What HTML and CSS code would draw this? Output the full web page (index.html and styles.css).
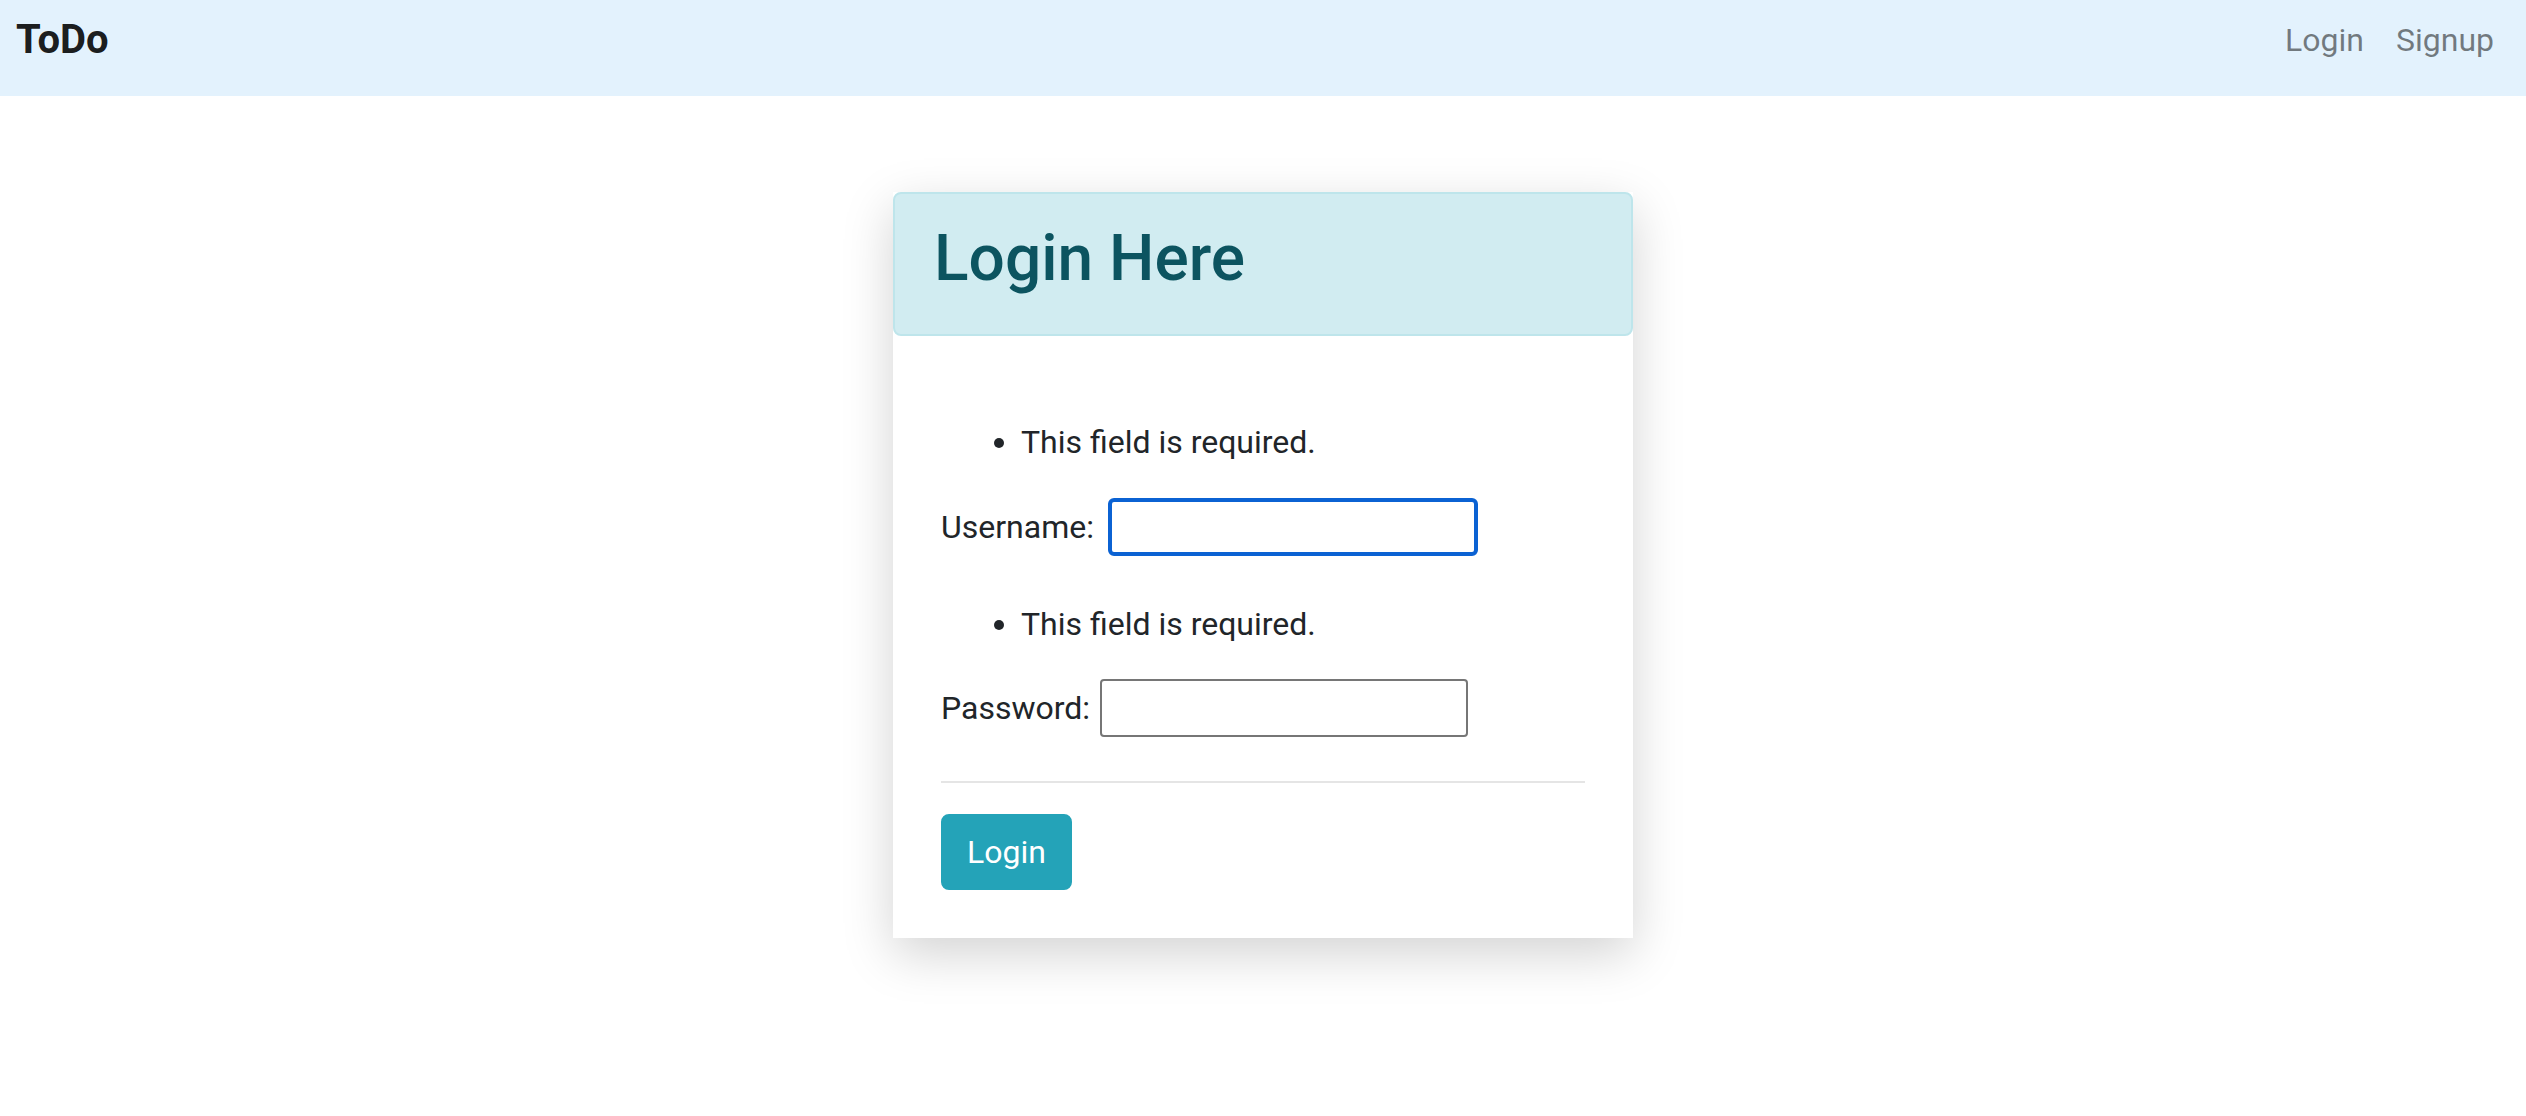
FILE: index.html
```html
<!DOCTYPE html>
<html lang="en">
<head>
    <meta charset="UTF-8">
    <meta name="viewport" content="width=device-width, initial-scale=1.0">
    <title>ToDo - Login</title>
    <link rel="stylesheet" href="styles.css">
</head>
<body>
    <nav class="navbar">
        <a class="brand" href="#">ToDo</a>
        <div class="nav-links">
            <a href="#">Login</a>
            <a href="#">Signup</a>
        </div>
    </nav>

    <main class="page">
        <div class="card">
            <div class="card-header">
                <h2>Login Here</h2>
            </div>

            <div class="card-body">
                <form>
                    <ul class="errorlist first">
                        <li>This field is required.</li>
                    </ul>
                    <div class="field">
                        <label for="id_username">Username:</label>
                        <input type="text" id="id_username" class="focused">
                    </div>

                    <ul class="errorlist">
                        <li>This field is required.</li>
                    </ul>
                    <div class="field">
                        <label for="id_password">Password:</label>
                        <input type="password" id="id_password">
                    </div>

                    <hr>
                    <button type="button" class="btn-login">Login</button>
                </form>
            </div>
        </div>
    </main>
</body>
</html>
```

FILE: styles.css
```css
*{
    margin: 0;
    box-sizing: border-box;
}

body{
    font-family: Roboto, "Liberation Sans", sans-serif;
    font-size: 32px;
    line-height: 48px;
    color: #212529;
    background-color: #ffffff;
}

a{
    text-decoration: none;
}

/* top bar */
.navbar{
    height: 96px;
    padding: 0 16px 16px 16px;
    display: flex;
    align-items: center;
    justify-content: space-between;
    background-color: #e3f2fd;
}

.brand{
    font-size: 40px;
    line-height: 60px;
    font-weight: 700;
    color: rgba(0, 0, 0, 0.9);
}

.nav-links{
    display: flex;
}

.nav-links a{
    padding: 0 16px;
    color: rgba(0, 0, 0, 0.5);
}

/* login card */
.page{
    display: flex;
    justify-content: center;
    padding: 96px 0 120px 0;
}

.card{
    width: 740px;
    background-color: #ffffff;
    box-shadow: 0 16px 48px rgba(0, 0, 0, 0.175);
}

.card-header{
    padding: 26px 38px 37px 39px;
    border: 2px solid #bee5eb;
    border-radius: 8px;
    background-color: #d1ecf1;
}

.card-header h2{
    font-size: 64px;
    line-height: 77px;
    font-weight: 500;
    color: #0c5460;
}

.card-body{
    padding: 48px;
}

.errorlist{
    padding-left: 80px;
    margin-bottom: 31px;
}

.errorlist.first{
    margin-top: 34px;
    margin-bottom: 32px;
}

.field{
    height: 58px;
    margin-bottom: 44px;
    display: flex;
    align-items: center;
    gap: 10px;
}

.field input{
    width: 368px;
    height: 58px;
    padding: 2px 4px;
    font-size: 32px;
    border: 2px solid #767676;
    border-radius: 4px;
    background-color: #ffffff;
    outline: none;
}

.field input.focused{
    width: 370px;
    margin-left: 4px;
    border: 4px solid #0b62d3;
    border-radius: 6px;
}

.card-body hr{
    border: none;
    border-top: 2px solid rgba(0, 0, 0, 0.1);
    margin-bottom: 31px;
}

.btn-login{
    padding: 12px 24px;
    font-family: inherit;
    font-size: 32px;
    line-height: 48px;
    color: #ffffff;
    border: 2px solid #24a3b8;
    border-radius: 8px;
    background-color: #24a3b8;
    cursor: pointer;
}
```
